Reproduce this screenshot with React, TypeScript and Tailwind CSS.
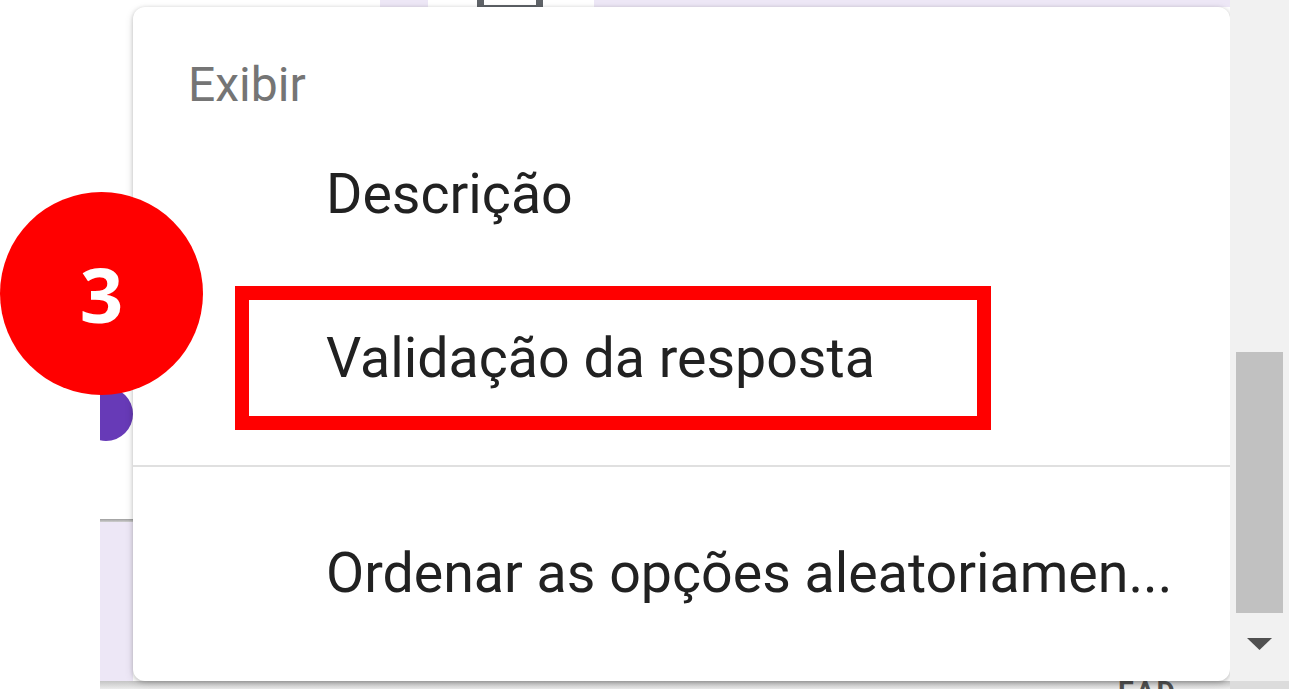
export default function App() {
  return (
    <div className="relative w-[1289px] h-[689px] overflow-hidden bg-white flex font-['Roboto',sans-serif]">
      {/* white margin outside the page */}
      <div className="w-[100px] shrink-0 bg-white"></div>

      {/* page behind the menu */}
      <div className="w-[1130px] shrink-0 flex flex-col">
        <div className="h-[7px] flex">
          <div className="w-[280px] bg-white"></div>
          <div className="w-[48px] bg-[#ede7f6]"></div>
          <div className="w-[49px] bg-white"></div>
          <div className="w-[66px] border-x-[7px] border-b-[2px] border-[#5f6368]"></div>
          <div className="w-[51px] bg-white"></div>
          <div className="flex-1 bg-[#ede7f6]"></div>
        </div>
        <div className="flex-1 flex">
          <div className="w-[33px] flex flex-col">
            <div className="h-[380px]"></div>
            <div className="h-[54px] overflow-hidden">
              <div className="w-[54px] h-[54px] -ml-[21px] rounded-full bg-[#673ab7]"></div>
            </div>
            <div className="h-[78px]"></div>
            <div className="h-[3px] bg-gradient-to-b from-[#9e9e9e] to-[#cfcfcf]"></div>
            <div className="flex-1 bg-[#ede7f6]"></div>
          </div>
          <div className="flex-1"></div>
        </div>
        <div className="h-[8px] flex overflow-hidden bg-gradient-to-b from-[#c4c4c4] to-[#ececec]">
          <div className="w-[1018px]"></div>
          <span className="-mt-[3px] text-[28px] leading-none font-bold tracking-[2px] text-[#505050]">EAD</span>
        </div>
      </div>

      {/* scrollbar */}
      <div className="relative z-10 w-[59px] shrink-0 bg-[#f1f1f1] flex flex-col">
        <div className="h-[352px]"></div>
        <div className="h-[261px] mx-[6px] bg-[#c1c1c1]"></div>
        <div className="flex-1 flex items-center justify-center pb-[6px]">
          <svg width="25" height="12" viewBox="0 0 25 12">
            <path d="M0 0 L25 0 L12.5 12 Z" fill="#505050" />
          </svg>
        </div>
        <div className="h-[8px] bg-[#dcdcdc]"></div>
      </div>

      {/* dropdown menu */}
      <div className="absolute left-[133px] top-[7px] w-[1097px] h-[674px] rounded-[12px] bg-white shadow-[0_1px_4px_rgba(0,0,0,0.2),0_3px_10px_rgba(0,0,0,0.12)] flex flex-col">
        <div className="pt-[54px] pb-[4px] pl-[55px] text-[48px] leading-[48px] text-[#757575]">Exibir</div>
        <div className="h-[164px] flex items-center pl-[193px] text-[55.5px] text-[#212121]">Descrição</div>
        <div className="h-[164px] flex items-center pl-[193px] text-[55.5px] text-[#212121]">Validação da resposta</div>
        <div className="mt-[24px] h-[2px] bg-[#e0e0e0]"></div>
        <div className="mt-[25px] h-[164px] flex items-center pl-[193px] text-[55.5px] text-[#212121]">
          <span className="whitespace-nowrap">Ordenar as opções aleatoriamen...</span>
        </div>
      </div>

      {/* annotation */}
      <div className="absolute left-[235px] top-[286px] w-[756px] h-[144px] border-[14px] border-[#ff0000]"></div>
      <div className="absolute left-0 top-[192px] w-[203px] h-[203px] rounded-full bg-[#ff0000] flex items-center justify-center">
        <span className="text-[76px] leading-none font-bold text-white font-['Open_Sans',sans-serif]">3</span>
      </div>
    </div>
  );
}
